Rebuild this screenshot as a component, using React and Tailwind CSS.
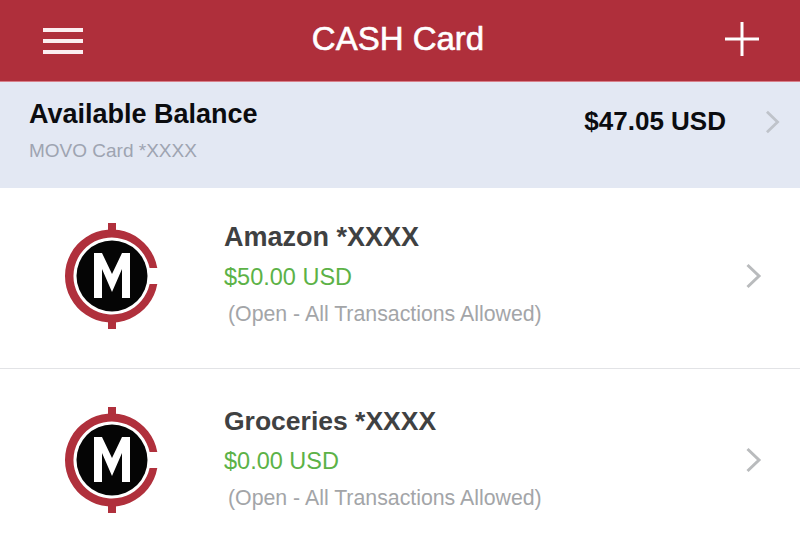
const FONT = "font-['Liberation_Sans',Arial,sans-serif]";

function Chevron({ className }) {
  return (
    <svg viewBox="0 0 16 26" className={className} fill="none" stroke="currentColor" strokeWidth="3">
      <path d="M2 2 L13.5 13 L2 24" />
    </svg>
  );
}

function MovoLogo() {
  return (
    <svg viewBox="0 0 100 110" className="w-[100px] h-[110px] blur-[0.4px]">
      <rect x="46" y="2" width="8" height="10" fill="#b0303c" />
      <rect x="46" y="98" width="8" height="10" fill="#b0303c" />
      {/* C ring, flat cut ends on the right */}
      <path
        d="M95.3 47 A 46.5 46.5 0 1 0 95.3 63 L 87.6 63 A 38.5 38.5 0 1 1 87.6 47 Z"
        fill="#b0303c"
      />
      <circle cx="50" cy="55" r="35.5" fill="#050505" />
      <path d="M32 77 V32 H40 L50 53 L60 32 H68 V77 H60 V48 L50 71 L40 48 V77 Z" fill="#fff" />
    </svg>
  );
}

function CardRow({ name, amount, height, nameSize, border }) {
  return (
    <div className={`flex items-center pb-[4px] ${height} ${border ? "border-b border-[#e2e3e6]" : ""}`}>
      <div className="w-[224px] pl-[62px] shrink-0 flex items-center">
        <MovoLogo />
      </div>
      <div className="flex-1 flex flex-col pb-[5px]">
        <div className={`${nameSize} leading-[32px] font-bold text-[#3f4142]`}>{name}</div>
        <div className="text-[23.5px] leading-[30px] mt-[9px] text-[#5cb247]">{amount}</div>
        <div className="text-[21.3px] leading-[26px] mt-[9px] pl-[4px] text-[#a3a5a8]">
          (Open - All Transactions Allowed)
        </div>
      </div>
      <Chevron className="w-[17px] h-[26px] mr-[38px] text-[#b9bbbd]" />
    </div>
  );
}

export default function App() {
  return (
    <div className={`w-[800px] h-[533px] overflow-hidden bg-white ${FONT}`}>
      <header className="h-[82px] bg-[#af2f3b] border-b border-[#d8808a] flex items-center justify-between pl-[43px] pr-[41px]">
        <div className="flex flex-col gap-[7px]">
          <div className="w-[40px] h-[4px] bg-[#fbeef0]" />
          <div className="w-[40px] h-[4px] bg-[#fbeef0]" />
          <div className="w-[40px] h-[4px] bg-[#fbeef0]" />
        </div>
        <div className="text-[33px] mr-[12px] mb-[3px] text-white [-webkit-text-stroke:0.6px_white]">CASH Card</div>
        <svg viewBox="0 0 34 34" className="w-[34px] h-[34px] mb-[4px] text-white" stroke="currentColor" strokeWidth="3">
          <path d="M17 0 V34 M0 17 H34" />
        </svg>
      </header>

      <section className="h-[106px] bg-[#e3e8f3] flex items-center pl-[29px] pr-[20px] pb-[9px]">
        <div className="flex-1 flex flex-col">
          <div className="text-[27px] leading-[32px] font-bold text-[#0b0c0f]">Available Balance</div>
          <div className="text-[19px] leading-[26px] mt-[8px] text-[#9ea4b1]">MOVO Card *XXXX</div>
        </div>
        <div className="text-[26px] font-bold text-[#0b0c0f] mb-[19px] mr-[39px]">$47.05 USD</div>
        <Chevron className="w-[15px] h-[24px] mb-[17px] text-[#bfc3ca]" />
      </section>

      <CardRow name="Amazon *XXXX" amount="$50.00 USD" height="h-[181px]" nameSize="text-[27px]" border />
      <CardRow name="Groceries *XXXX" amount="$0.00 USD" height="h-[186px]" nameSize="text-[26.5px]" />
    </div>
  );
}
